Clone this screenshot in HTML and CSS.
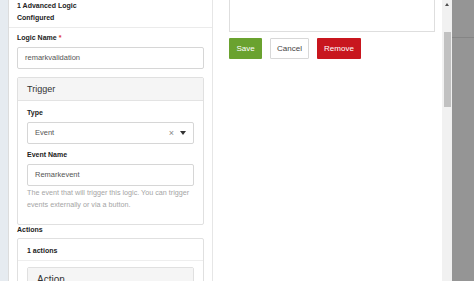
FILE: index.html
```html
<!DOCTYPE html>
<html lang="en">
<head>
  <meta charset="UTF-8">
  <title>Advanced Logic</title>
  <link rel="stylesheet" href="styles.css">
</head>
<body>
  <div class="backdrop"></div>

  <div class="dialog">
    <div class="logic-col">
      <div class="summary">1 Advanced Logic<br>Configured</div>

      <div class="form-body">
        <label class="field-label">Logic Name <span class="req">*</span></label>
        <div class="text-input">remarkvalidation</div>

        <div class="panel trigger">
          <div class="panel-heading">Trigger</div>
          <div class="panel-body">
            <label class="field-label">Type</label>
            <div class="text-input select">
              <span>Event</span>
              <span class="select-tools"><span class="clear">&times;</span><span class="caret"></span></span>
            </div>

            <label class="field-label">Event Name</label>
            <div class="text-input">Remarkevent</div>
            <p class="help">The event that will trigger this logic. You can trigger events externally or via a button.</p>
          </div>
        </div>

        <label class="field-label section">Actions</label>
        <div class="panel actions">
          <div class="actions-count">1 actions</div>
          <div class="panel inner">
            <div class="panel-heading">Action</div>
          </div>
        </div>
      </div>
    </div>

    <div class="edit-col">
      <div class="textarea"></div>
      <div class="buttons">
        <button class="btn save">Save</button>
        <button class="btn cancel">Cancel</button>
        <button class="btn remove">Remove</button>
      </div>
    </div>

    <div class="scrollbar">
      <div class="arrow"></div>
      <div class="thumb"></div>
    </div>
  </div>

  <div class="overlay">
    <div class="overlay-line"></div>
  </div>
</body>
</html>
```

FILE: styles.css
```css
body {
  font-family: "Liberation Sans", Arial, sans-serif;
  margin: 0;
  padding: 0;
  width: 474px;
  height: 281px;
  overflow: hidden;
  display: flex;
  background-color: #fff;
  color: #333;
}

.backdrop {
  width: 8px;
  background-color: #e6ebf0;
  border-right: 1px solid #dcdcdc;
}

.dialog {
  display: flex;
  width: 443px;
  height: 281px;
  background-color: #fff;
}

.logic-col {
  width: 203px;
  border-right: 1px solid #e6e6e6;
  flex-shrink: 0;
}

.summary {
  font-size: 7px;
  font-weight: bold;
  line-height: 12px;
  padding: 0 8px 3px;
  border-bottom: 1px solid #ebebeb;
  color: #222;
}

.form-body {
  padding: 4px 8px 0;
}

.field-label {
  display: block;
  font-size: 7px;
  font-weight: bold;
  color: #222;
  line-height: 12px;
  margin-bottom: 3px;
}
.req {
  color: #d33;
}

.text-input {
  height: 20px;
  border: 1px solid #d6d6d6;
  border-radius: 2px;
  font-size: 7.5px;
  line-height: 20px;
  padding: 0 7px;
  color: #555;
}
.select {
  display: flex;
  justify-content: space-between;
  align-items: center;
}
.select-tools {
  display: flex;
  align-items: center;
  gap: 6px;
}
.clear {
  color: #888;
  font-size: 9px;
}
.caret {
  width: 0;
  height: 0;
  border-left: 3.5px solid transparent;
  border-right: 3.5px solid transparent;
  border-top: 4px solid #333;
}

.panel {
  border: 1px solid #e0e0e0;
  border-radius: 2px;
}
.panel-heading {
  background-color: #f5f5f5;
  border-bottom: 1px solid #e3e3e3;
  height: 22px;
  line-height: 22px;
  font-size: 9px;
  padding: 0 9px;
  color: #333;
}

.trigger {
  margin-top: 8px;
}
.trigger .panel-body {
  padding: 6px 9px 0;
  height: 117px;
}
.trigger .select {
  margin-bottom: 5px;
}
.help {
  margin: 1px 0 0;
  font-size: 7.2px;
  line-height: 12px;
  color: #a5a5a5;
}

.field-label.section {
  line-height: 10px;
  margin: 0 0 3px;
}

.actions {
  height: 60px;
}
.actions-count {
  font-size: 7px;
  font-weight: bold;
  color: #222;
  line-height: 12px;
  padding: 6px 9px 3px;
  border-bottom: 1px solid #eee;
}
.inner {
  margin: 6px 9px 0;
}
.inner .panel-heading {
  font-size: 10px;
  height: 30px;
  line-height: 24px;
}

.edit-col {
  flex: 1;
  padding: 0 7px 0 16px;
}
.textarea {
  height: 31px;
  border: 1px solid #dedede;
  border-top: none;
}
.buttons {
  display: flex;
  gap: 8px;
  margin-top: 6px;
}
.btn {
  height: 21px;
  font-family: inherit;
  font-size: 8px;
  border: 1px solid transparent;
  border-radius: 1px;
  padding: 0;
  cursor: pointer;
}
.save {
  width: 33px;
  background-color: #6aa22f;
  color: #fff;
}
.cancel {
  width: 39px;
  background-color: #fff;
  border-color: #d8d8d8;
  color: #444;
}
.remove {
  width: 44px;
  background-color: #c8161e;
  color: #fff;
}

.scrollbar {
  width: 10px;
  background-color: #f1f1f1;
  flex-shrink: 0;
}
.arrow {
  width: 0;
  height: 0;
  margin: 3px auto 0;
  border-left: 2px solid transparent;
  border-right: 2px solid transparent;
  border-bottom: 3px solid #505050;
}
.thumb {
  width: 7px;
  height: 75px;
  margin: 26px auto 0;
  background-color: #c1c1c1;
}

.overlay {
  flex: 1;
  background-color: #959595;
}
.overlay-line {
  margin-top: 37px;
  height: 1px;
  background-color: #858585;
}
```
